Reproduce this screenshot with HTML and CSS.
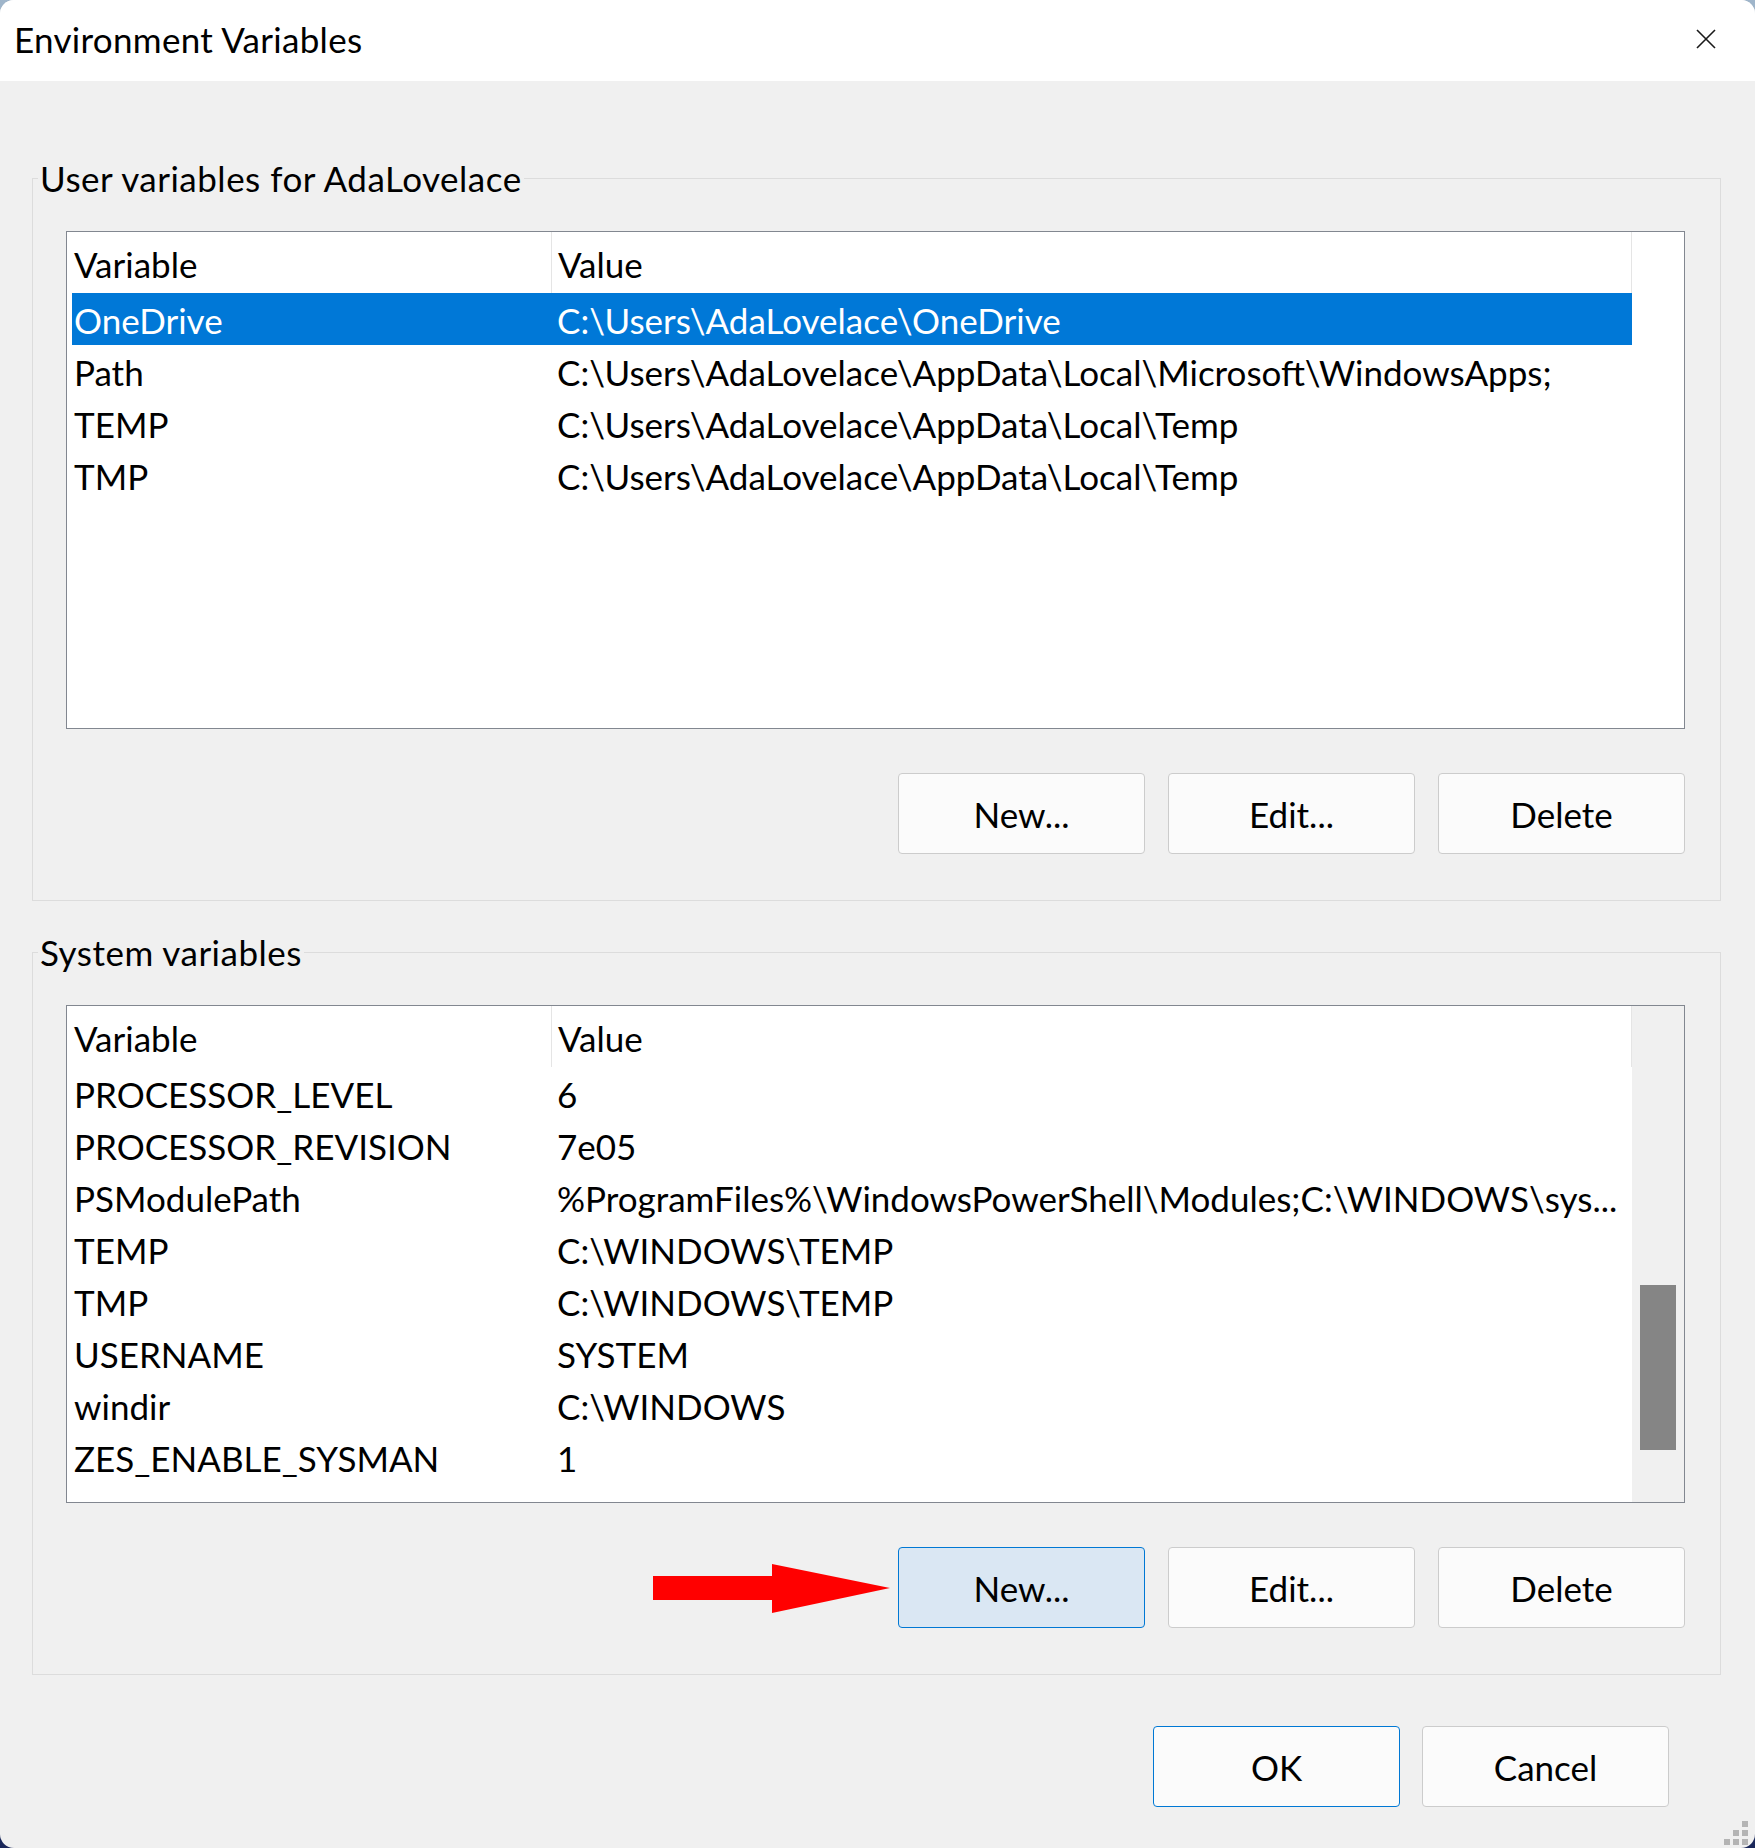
FILE: index.html
```html
<!DOCTYPE html>
<html lang="en">
<head>
    <meta charset="UTF-8">
    <title>Environment Variables</title>
    <link rel="stylesheet" href="styles.css">
</head>
<body>
<div class="window">

    <!-- Title bar -->
    <div class="titlebar">
        <span class="title">Environment Variables</span>
        <svg class="close" width="20" height="20" viewBox="0 0 20 20">
            <path d="M1 1 L19 19 M19 1 L1 19" stroke="#1a1a1a" stroke-width="1.6" fill="none"/>
        </svg>
    </div>

    <div class="content">

        <!-- User variables -->
        <fieldset class="group">
            <legend>User variables for AdaLovelace</legend>
            <div class="list">
                <div class="list-main">
                    <div class="list-head">
                        <div class="head-var">Variable</div>
                        <div class="head-val">Value</div>
                    </div>
                    <div class="row selected"><span class="cell-var">OneDrive</span><span class="cell-val">C:\Users\AdaLovelace\OneDrive</span></div>
                    <div class="row"><span class="cell-var">Path</span><span class="cell-val">C:\Users\AdaLovelace\AppData\Local\Microsoft\WindowsApps;</span></div>
                    <div class="row"><span class="cell-var">TEMP</span><span class="cell-val">C:\Users\AdaLovelace\AppData\Local\Temp</span></div>
                    <div class="row"><span class="cell-var">TMP</span><span class="cell-val">C:\Users\AdaLovelace\AppData\Local\Temp</span></div>
                </div>
                <div class="list-side"></div>
            </div>
            <div class="btn-row">
                <button class="btn">New...</button>
                <button class="btn">Edit...</button>
                <button class="btn">Delete</button>
            </div>
        </fieldset>

        <!-- System variables -->
        <fieldset class="group group-system">
            <legend>System variables</legend>
            <div class="list">
                <div class="list-main">
                    <div class="list-head">
                        <div class="head-var">Variable</div>
                        <div class="head-val">Value</div>
                    </div>
                    <div class="row"><span class="cell-var">PROCESSOR_LEVEL</span><span class="cell-val">6</span></div>
                    <div class="row"><span class="cell-var">PROCESSOR_REVISION</span><span class="cell-val">7e05</span></div>
                    <div class="row"><span class="cell-var">PSModulePath</span><span class="cell-val">%ProgramFiles%\WindowsPowerShell\Modules;C:\WINDOWS\sys...</span></div>
                    <div class="row"><span class="cell-var">TEMP</span><span class="cell-val">C:\WINDOWS\TEMP</span></div>
                    <div class="row"><span class="cell-var">TMP</span><span class="cell-val">C:\WINDOWS\TEMP</span></div>
                    <div class="row"><span class="cell-var">USERNAME</span><span class="cell-val">SYSTEM</span></div>
                    <div class="row"><span class="cell-var">windir</span><span class="cell-val">C:\WINDOWS</span></div>
                    <div class="row"><span class="cell-var">ZES_ENABLE_SYSMAN</span><span class="cell-val">1</span></div>
                </div>
                <div class="list-side scrollbar">
                    <div class="thumb"></div>
                </div>
            </div>
            <div class="btn-row">
                <!-- annotation arrow -->
                <svg class="arrow" width="237" height="49" viewBox="0 0 237 49">
                    <rect x="0" y="12" width="120" height="24" fill="#ff0000"/>
                    <polygon points="119,0 237,24 119,49" fill="#ff0000"/>
                </svg>
                <button class="btn btn-hover">New...</button>
                <button class="btn">Edit...</button>
                <button class="btn">Delete</button>
            </div>
        </fieldset>

        <div class="dialog-btns">
            <button class="btn btn-default">OK</button>
            <button class="btn">Cancel</button>
        </div>
    </div>

    <!-- resize grip -->
    <svg class="grip" width="24" height="24" viewBox="0 0 24 24">
        <rect x="18" y="0" width="6" height="6"/>
        <rect x="9" y="9" width="6" height="6"/>
        <rect x="18" y="9" width="6" height="6"/>
        <rect x="0" y="18" width="6" height="6"/>
        <rect x="9" y="18" width="6" height="6"/>
        <rect x="18" y="18" width="6" height="6"/>
    </svg>
</div>
</body>
</html>
```

FILE: styles.css
```css
body {
    margin: 0;
    background: linear-gradient(to bottom, #9fb5ca 0%, #6f97bf 40%, #2a4a98 80%, #1a2759 100%);
    font-family: "Lato", "Noto Sans", sans-serif;
    font-size: 35px;
    color: #000;
}

.window {
    position: relative;
    width: 1755px;
    height: 1848px;
    background-color: #f0f0f0;
    border-radius: 14px;
    overflow: hidden;
}

.titlebar {
    height: 81px;
    background-color: #ffffff;
    display: flex;
    align-items: center;
    justify-content: space-between;
    padding: 0 39px 4px 14px;
    box-sizing: border-box;
}

.title {
    font-size: 35px;
    letter-spacing: 0.3px;
}

.close {
    display: block;
}

.content {
    padding: 0 34px 0 32px;
}

/* group boxes */
.group {
    margin: 73px 0 0 0;
    padding: 29px 35px 46px 33px;
    border: 1px solid #dcdcdc;
    min-width: 0;
}

.group-system {
    margin-top: 27px;
}

.group legend {
    margin-left: -28px;
    padding: 0 2px;
    line-height: 48px;
    letter-spacing: 0.5px;
}

/* list views */
.list {
    height: 498px;
    box-sizing: border-box;
    border: 1px solid #828790;
    background-color: #ffffff;
    display: flex;
}

.list-main {
    flex: 1;
    min-width: 0;
}

.list-side {
    width: 52px;
}

.scrollbar {
    background-color: #f0f0f0;
    padding-top: 279px;
    box-sizing: border-box;
}

.thumb {
    margin-left: 8px;
    width: 36px;
    height: 165px;
    background-color: #858585;
}

.list-head {
    height: 61px;
    display: flex;
    border-right: 1px solid #e5e5e5;
}

.head-var {
    width: 477px;
    padding-left: 7px;
    border-right: 1px solid #e5e5e5;
    line-height: 64px;
}

.head-val {
    flex: 1;
    padding-left: 6px;
    line-height: 64px;
}

.row {
    margin-left: 5px;
    height: 52px;
    line-height: 54px;
    display: flex;
    white-space: nowrap;
}

.row.selected {
    background-color: #0078d7;
    color: #ffffff;
}

.cell-var {
    width: 476px;
    padding-left: 2px;
}

.cell-val {
    flex: 1;
    padding-left: 7px;
    overflow: hidden;
}

/* buttons */
.btn-row {
    position: relative;
    margin-top: 44px;
    display: flex;
    justify-content: flex-end;
    gap: 23px;
}

.btn {
    width: 247px;
    height: 81px;
    font-family: inherit;
    font-size: 35px;
    color: #000;
    background-color: #fbfbfb;
    border: 1px solid #cccccc;
    border-radius: 4px;
    padding: 0;
}

.btn-hover {
    background-color: #dae7f3;
    border-color: #0078d4;
}

.btn-default {
    border-color: #0078d4;
}

.arrow {
    position: absolute;
    left: 587px;
    top: 17px;
}

.dialog-btns {
    margin-top: 51px;
    padding-right: 52px;
    display: flex;
    justify-content: flex-end;
    gap: 22px;
}

.grip {
    position: absolute;
    right: 7px;
    bottom: 3px;
    fill: #b4b4b4;
}
```
